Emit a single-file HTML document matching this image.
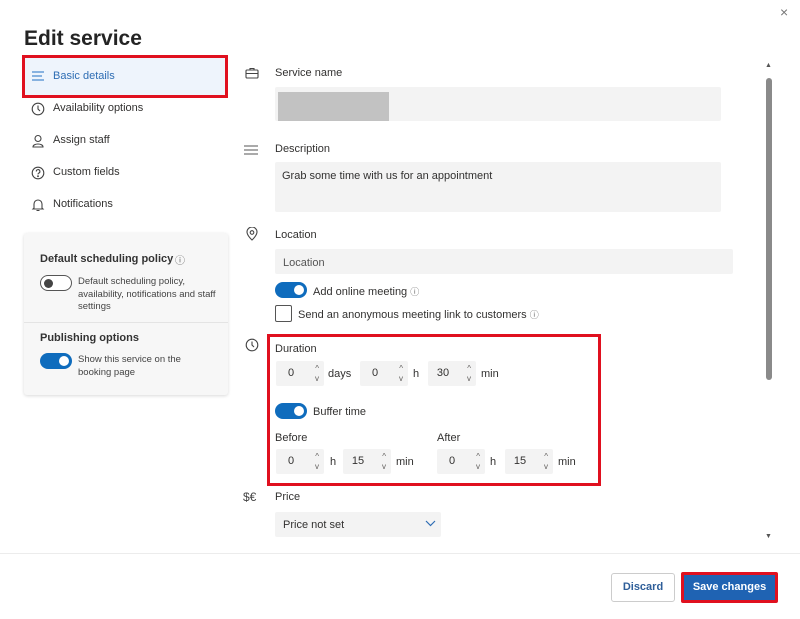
<!DOCTYPE html>
<html><head><meta charset="utf-8"><style>
*{box-sizing:border-box;margin:0;padding:0}
body{width:800px;height:619px;background:#fff;font-family:"Liberation Sans",sans-serif;font-size:11px;color:#323130;position:relative;overflow:hidden}
.a{position:absolute}
.t{position:absolute;white-space:nowrap}
.in{position:absolute;background:#f3f3f3;border-radius:2px}
.sp{position:absolute;background:#f3f3f3;width:48px;height:25px;border-radius:2px}
.sp span{position:absolute;left:0;width:30px;text-align:center;top:6px;font-size:11px}
.sp i{position:absolute;right:5px;font-style:normal;font-size:8px;color:#605e5c;line-height:8px}
.tog{position:absolute;width:32px;height:16px;border-radius:8px;background:#0f6cbd}
.tog:after{content:"";position:absolute;right:3px;top:3px;width:10px;height:10px;border-radius:50%;background:#fff}
.red{position:absolute;border:3px solid #e0101f}
svg{position:absolute}
</style></head><body>
<div class="t" style="left:780px;top:4px;font-size:14px;color:#777">×</div>
<div class="t" style="left:24px;top:27px;font-size:21px;font-weight:600;color:#242424">Edit service</div>

<div class="a" style="left:24px;top:57px;width:202px;height:40px;background:#eef4fc"></div>
<div class="red" style="left:22px;top:55px;width:206px;height:43px"></div>
<svg style="left:31px;top:70px" width="14" height="12" stroke="#4a8bd0" stroke-width="1.2"><path d="M1 2h12M1 6h10M1 10h12"/></svg>
<div class="t" style="left:53px;top:70px;color:#2e6db4">Basic details</div>
<svg style="left:31px;top:102px" width="14" height="14" fill="none" stroke="#444" stroke-width="1.1"><circle cx="7" cy="7" r="5.8"/><path d="M7 3.5V7l2 2"/></svg>
<div class="t" style="left:53px;top:102px">Availability options</div>
<svg style="left:31px;top:134px" width="14" height="14" fill="none" stroke="#444" stroke-width="1.1"><circle cx="7" cy="4.5" r="3"/><path d="M2 13c0-4 10-4 10 0z"/></svg>
<div class="t" style="left:53px;top:134px">Assign staff</div>
<svg style="left:31px;top:166px" width="14" height="14" fill="none" stroke="#444" stroke-width="1.1"><circle cx="7" cy="7" r="5.8"/><path d="M5.3 5.5a1.8 1.8 0 1 1 2.4 1.6c-.6.3-.7.7-.7 1.3"/><circle cx="7" cy="10.2" r=".4"/></svg>
<div class="t" style="left:53px;top:166px">Custom fields</div>
<svg style="left:31px;top:198px" width="14" height="14" fill="none" stroke="#444" stroke-width="1.1"><path d="M3 10V6a4 4 0 0 1 8 0v4l1 1H2zM5.5 12.5h3"/></svg>
<div class="t" style="left:53px;top:198px">Notifications</div>

<div class="a" style="left:24px;top:233px;width:204px;height:162px;background:#f7f7f7;box-shadow:0 1px 3px rgba(0,0,0,.15);border-radius:3px"></div>
<div class="a" style="left:24px;top:322px;width:204px;height:1px;background:#e4e4e4"></div>
<div class="t" style="left:40px;top:253px;font-weight:700;color:#333">Default scheduling policy</div>
<div class="t" style="left:175px;top:252px;font-size:10px;color:#666">ⓘ</div>
<div class="a" style="left:40px;top:275px;width:32px;height:16px;border-radius:8px;border:1px solid #555;background:#fff"></div>
<div class="a" style="left:44px;top:279px;width:9px;height:9px;border-radius:50%;background:#444"></div>
<div class="a" style="left:78px;top:276px;font-size:9.5px;line-height:12.5px;color:#444;width:140px">Default scheduling policy, availability, notifications and staff settings</div>
<div class="t" style="left:40px;top:332px;font-weight:700;color:#333">Publishing options</div>
<div class="tog" style="left:40px;top:353px"></div>
<div class="a" style="left:78px;top:354px;font-size:9.5px;line-height:12.5px;color:#444;width:120px">Show this service on the booking page</div>

<svg style="left:245px;top:67px" width="14" height="12" fill="none" stroke="#444" stroke-width="1.1"><rect x="1" y="3" width="12" height="8" rx="1"/><path d="M5 3V1.5h4V3M1 6.5h12"/></svg>
<div class="t" style="left:275px;top:67px">Service name</div>
<div class="in" style="left:275px;top:87px;width:446px;height:34px"></div>
<div class="a" style="left:278px;top:92px;width:111px;height:29px;background:#c2c2c2"></div>
<svg style="left:244px;top:144px" width="14" height="12" stroke="#555" stroke-width="1.1"><path d="M0 2h14M0 6h14M0 10h14"/></svg>
<div class="t" style="left:275px;top:143px">Description</div>
<div class="in" style="left:275px;top:162px;width:446px;height:50px"></div>
<div class="t" style="left:282px;top:170px">Grab some time with us for an appointment</div>
<svg style="left:245px;top:227px" width="14" height="14" fill="none" stroke="#444" stroke-width="1.1"><path d="M7 13s5-4.5 5-8A5 5 0 0 0 2 5c0 3.5 5 8 5 8z"/><circle cx="7" cy="5.5" r="1.8"/></svg>
<div class="t" style="left:275px;top:229px">Location</div>
<div class="in" style="left:275px;top:249px;width:458px;height:25px"></div>
<div class="t" style="left:283px;top:257px;color:#555">Location</div>
<div class="tog" style="left:275px;top:282px"></div>
<div class="t" style="left:313px;top:285px">Add online meeting <span style="font-size:9px;color:#666">ⓘ</span></div>
<div class="a" style="left:275px;top:305px;width:17px;height:17px;border:1px solid #555;border-radius:2px"></div>
<div class="t" style="left:298px;top:308px">Send an anonymous meeting link to customers <span style="font-size:9px;color:#666">ⓘ</span></div>

<svg style="left:245px;top:338px" width="14" height="14" fill="none" stroke="#444" stroke-width="1.1"><circle cx="7" cy="7" r="5.8"/><path d="M7 3.5V7l2 2"/></svg>
<div class="red" style="left:267px;top:334px;width:334px;height:152px"></div>
<div class="t" style="left:275px;top:343px">Duration</div>
<div class="sp" style="left:276px;top:361px"><span>0</span><i style="top:4px">^</i><i style="top:14px">v</i></div>
<div class="t" style="left:328px;top:368px">days</div>
<div class="sp" style="left:360px;top:361px"><span>0</span><i style="top:4px">^</i><i style="top:14px">v</i></div>
<div class="t" style="left:413px;top:368px">h</div>
<div class="sp" style="left:428px;top:361px"><span>30</span><i style="top:4px">^</i><i style="top:14px">v</i></div>
<div class="t" style="left:481px;top:368px">min</div>
<div class="tog" style="left:275px;top:403px"></div>
<div class="t" style="left:313px;top:406px">Buffer time</div>
<div class="t" style="left:275px;top:432px">Before</div>
<div class="t" style="left:437px;top:432px">After</div>
<div class="sp" style="left:276px;top:449px"><span>0</span><i style="top:4px">^</i><i style="top:14px">v</i></div>
<div class="t" style="left:330px;top:456px">h</div>
<div class="sp" style="left:343px;top:449px"><span>15</span><i style="top:4px">^</i><i style="top:14px">v</i></div>
<div class="t" style="left:396px;top:456px">min</div>
<div class="sp" style="left:437px;top:449px"><span>0</span><i style="top:4px">^</i><i style="top:14px">v</i></div>
<div class="t" style="left:490px;top:456px">h</div>
<div class="sp" style="left:505px;top:449px"><span>15</span><i style="top:4px">^</i><i style="top:14px">v</i></div>
<div class="t" style="left:558px;top:456px">min</div>

<div class="t" style="left:243px;top:490px;font-size:12px;color:#444">$€</div>
<div class="t" style="left:275px;top:491px">Price</div>
<div class="in" style="left:275px;top:512px;width:166px;height:25px"></div>
<div class="t" style="left:283px;top:519px">Price not set</div>
<svg style="left:425px;top:520px" width="11" height="7" fill="none" stroke="#2e6db4" stroke-width="1.2"><path d="M1 1l4.5 4.5L10 1"/></svg>

<div class="t" style="left:765px;top:62px;font-size:7px;color:#555">▲</div>
<div class="a" style="left:766px;top:78px;width:6px;height:302px;background:#8a8a8a;border-radius:3px"></div>
<div class="t" style="left:765px;top:533px;font-size:7px;color:#555">▼</div>
<div class="a" style="left:0;top:553px;width:800px;height:1px;background:#ececec"></div>

<div class="a" style="left:611px;top:573px;width:64px;height:29px;border:1px solid #ccc;border-radius:3px;text-align:center;line-height:27px;font-weight:700;color:#2e5e99">Discard</div>
<div class="a" style="left:681px;top:572px;width:97px;height:31px;background:#e0101f;border-radius:2px"></div>
<div class="a" style="left:684px;top:575px;width:91px;height:25px;background:#1f63b3;text-align:center;line-height:25px;font-weight:700;color:#fff">Save changes</div>
</body></html>
